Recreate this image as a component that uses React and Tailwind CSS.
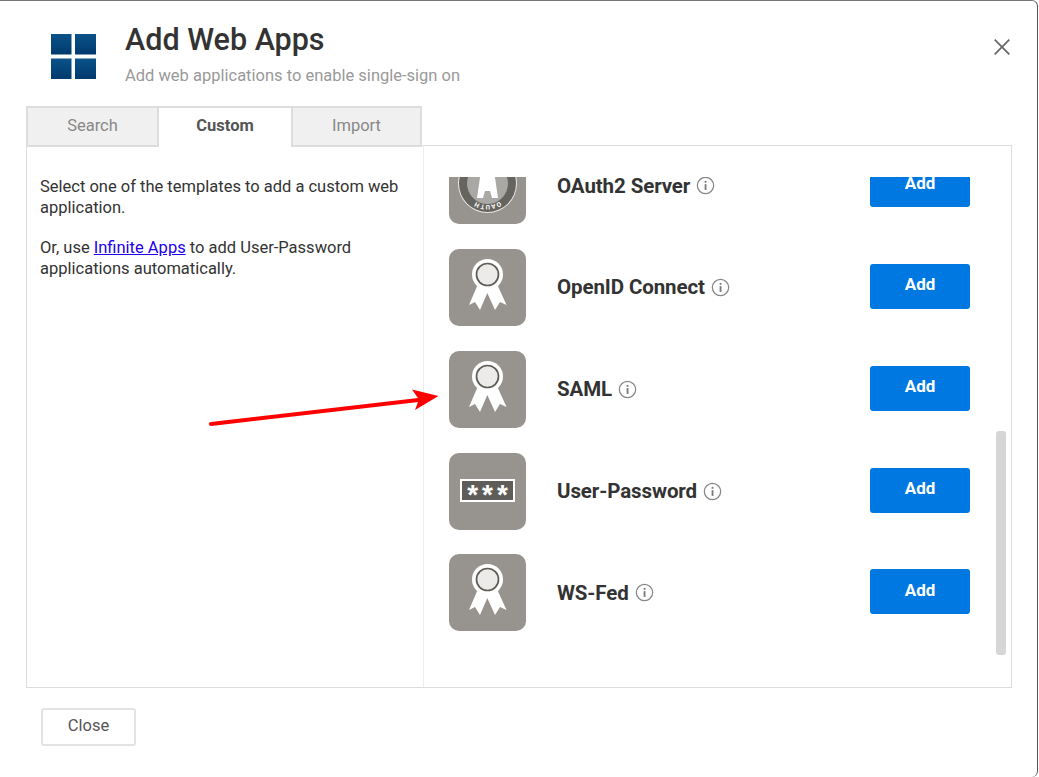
const Ribbon = () => (
  <svg viewBox="0 0 77 77" className="w-[77px] h-[77px] shrink-0">
    <rect width="77" height="77" rx="10" fill="#97948f" />
    <polygon points="29,35 20,56 26,53 31,61 38.3,44 46,61 51,53 57.5,56 48,35" fill="#fff" />
    <circle cx="38.5" cy="25.5" r="15.5" fill="#fff" />
    <circle cx="38.5" cy="25.5" r="11" fill="#ecebe9" stroke="#5e5c57" strokeWidth="1.7" />
  </svg>
);

const Password = () => (
  <svg viewBox="0 0 77 77" className="w-[77px] h-[77px] shrink-0">
    <rect width="77" height="77" rx="10" fill="#97948f" />
    <rect x="12" y="27" width="53" height="21" fill="#5f5d59" stroke="#fff" strokeWidth="2" />
    <text x="40.5" y="51" textAnchor="middle" fill="#fff" fontSize="28" fontWeight="700" letterSpacing="4" fontFamily="Liberation Sans, sans-serif">***</text>
  </svg>
);

const OAuth = () => (
  <svg viewBox="0 0 77 77" className="w-[77px] h-[77px] shrink-0">
    <defs>
      <path id="oauth-arc" d="M60 36.5 A21.5 21.5 0 0 1 17 36.5" />
    </defs>
    <rect width="77" height="77" rx="10" fill="#97948f" />
    <circle cx="38.5" cy="36.5" r="29.5" fill="#e8e8e8" />
    <circle cx="38.5" cy="36.5" r="28.5" fill="#66645f" />
    <circle cx="38.5" cy="36.5" r="20.5" fill="#aaa8a4" />
    <polygon points="34,10 43,10 49,51 43,51 41,44 36,44 34,51 28,51" fill="#fff" />
    <text textAnchor="middle" fill="#fff" fontSize="6.5" fontWeight="700" letterSpacing="0.8" fontFamily="Roboto, sans-serif">
      <textPath href="#oauth-arc" startOffset="50%">OAUTH</textPath>
    </text>
  </svg>
);

const Info = () => (
  <svg viewBox="0 0 20 20" className="w-[19px] h-[19px] shrink-0" fill="none">
    <circle cx="10" cy="10" r="8.6" stroke="#868686" strokeWidth="1.3" />
    <rect x="9.1" y="8.6" width="1.9" height="6" fill="#777" />
    <rect x="9.1" y="5.2" width="1.9" height="1.9" fill="#777" />
  </svg>
);

const rows = [
  { name: "OAuth2 Server", icon: <OAuth /> },
  { name: "OpenID Connect", icon: <Ribbon /> },
  { name: "SAML", icon: <Ribbon /> },
  { name: "User-Password", icon: <Password /> },
  { name: "WS-Fed", icon: <Ribbon /> },
];

export default function App() {
  return (
    <div className="relative w-[1039px] h-[777px] overflow-hidden bg-white font-['Roboto',sans-serif] text-[#333]">
      <div className="h-full w-[1038px] rounded-br-[6px] rounded-tr-[6px] border-t border-r border-t-[#777] border-r-[#555]">
        <div className="flex h-[105px] items-start pl-[50px] pr-[27px] pt-[32px]">
          <svg viewBox="0 0 47 47" className="w-[47px] h-[47px] shrink-0">
            <defs>
              <linearGradient id="win" x1="0" y1="0" x2="0" y2="1">
                <stop offset="0" stopColor="#0b5288" />
                <stop offset="1" stopColor="#003a6e" />
              </linearGradient>
            </defs>
            <rect x="1" y="1" width="20.5" height="20.5" fill="url(#win)" />
            <rect x="25" y="1" width="21" height="20.5" fill="url(#win)" />
            <rect x="1" y="25.5" width="20.5" height="20.5" fill="url(#win)" />
            <rect x="25" y="25.5" width="21" height="20.5" fill="url(#win)" />
          </svg>
          <div className="ml-[28px] -mt-[15px] flex-1">
            <div className="text-[30.5px] leading-[44px] font-medium text-[#333]">Add Web Apps</div>
            <div className="text-[16.5px] leading-[24px] mt-[2px] text-[#999]">Add web applications to enable single-sign on</div>
          </div>
          <svg viewBox="0 0 16 16" className="w-[16px] h-[16px] mt-[6px]" fill="none">
            <path d="M0.7 0.7 L15.3 15.3 M15.3 0.7 L0.7 15.3" stroke="#666" strokeWidth="1.7" />
          </svg>
        </div>

        <div className="flex ml-[26px] h-[41px] w-[396px] relative z-10 text-[16.5px]">
          <div className="w-[133px] flex items-center justify-center bg-[#f0f0f0] border-2 border-[#ddd] text-[#888]">Search</div>
          <div className="w-[132px] flex items-center justify-center bg-white border-t-2 border-[#ddd] font-bold text-[#555] pb-[2px]">Custom</div>
          <div className="w-[131px] flex items-center justify-center bg-[#f0f0f0] border-2 border-[#ddd] text-[#888]">Import</div>
        </div>

        <div className="flex ml-[26px] w-[986px] h-[543px] border border-[#ddd] -mt-[2px] relative">
          <div className="w-[397px] shrink-0 border-r border-[#eee] pl-[13px] pr-[20px] pt-[31px] text-[16.5px] leading-[20.5px] text-[#333]">
            <p>Select one of the templates to add a custom web application.</p>
            <p className="mt-[20px]">
              Or, use <span className="text-[#2200ee] underline">Infinite Apps</span> to add User-Password applications automatically.
            </p>
          </div>
          <div className="flex-1 mt-[31px] overflow-hidden">
            <div className="-mt-[42px] pl-[25px] pr-[41px]">
              {rows.map((r) => (
                <div key={r.name} className="flex items-center h-[101.75px]">
                  {r.icon}
                  <div className="ml-[31px] flex flex-1 items-center gap-[6px] text-[20.5px] font-bold tracking-[-0.1px] text-[#333]">
                    {r.name}
                    <Info />
                  </div>
                  <div className="w-[100px] h-[45px] -mt-[2px] rounded-[3px] bg-[#0078e2] flex items-center justify-center pb-[3px] text-[17px] font-bold text-white">Add</div>
                </div>
              ))}
            </div>
          </div>
          <div className="absolute left-[969px] top-[285px] w-[10px] h-[224px] rounded-[3px] bg-[#d6d6d6]" />
        </div>

        <div className="ml-[41px] mt-[20px] w-[95px] h-[38px] rounded-[3px] border-2 border-[#e3e3e3] bg-white flex items-center justify-center pb-[1px] text-[16.5px] text-[#555]">Close</div>
      </div>

      <svg className="absolute left-[205px] top-[388px] pointer-events-none" width="240" height="42" viewBox="0 0 240 42" fill="none">
        <path d="M6 36 L222 11" stroke="#ff0000" strokeWidth="4" strokeLinecap="round" />
        <polygon points="233.5,8 207,1.5 214,11.5 210,22" fill="#ff0000" />
      </svg>
    </div>
  );
}
